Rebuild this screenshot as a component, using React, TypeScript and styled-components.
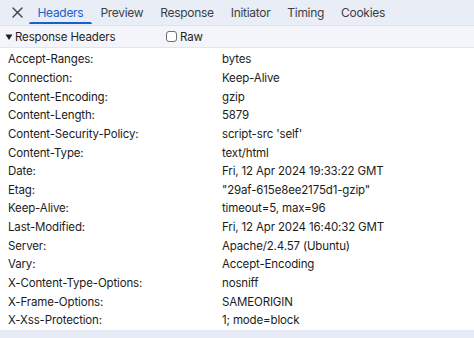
import React from "react";
import styled, { createGlobalStyle } from "styled-components";

const Global = createGlobalStyle`
  html, body { margin: 0; padding: 0; background: #fff; }
  body { font-family: Inter, "Noto Sans", sans-serif; color: #1f1f1f; }
`;

const Panel = styled.div`
  width: 474px;
  height: 338px;
  overflow: hidden;
  display: flex;
  flex-direction: column;
  background: #fff;
`;

const TabBar = styled.div`
  height: 25px;
  background: #e9edf6;
  display: flex;
  align-items: stretch;
  padding-left: 10px;
  flex-shrink: 0;
`;

const Close = styled.div`
  width: 14px;
  display: flex;
  align-items: center;
  justify-content: center;
  margin-right: 5px;
`;

const Tab = styled.div<{ $active?: boolean }>`
  position: relative;
  padding: 0 8.5px;
  display: flex;
  align-items: center;
  font-size: 12px;
  letter-spacing: -0.3px;
  color: ${(p) => (p.$active ? "#1b5fcf" : "#3c3f46")};
  ${(p) =>
    p.$active &&
    `&::after { content: ""; position: absolute; left: 0; right: 0; bottom: 1px; height: 2px; background: #1b5fcf; border-radius: 2px 2px 0 0; }`}
`;

const SubBar = styled.div`
  height: 21px;
  background: #f3f5fa;
  border-top: 1px solid #dfe3ec;
  border-bottom: 1px solid #e3e6ee;
  display: flex;
  align-items: center;
  padding-left: 5px;
  font-size: 11.5px;
  letter-spacing: -0.15px;
  flex-shrink: 0;
`;

const Section = styled.div`
  width: 161px;
  display: flex;
  align-items: center;
  gap: 2px;
`;

const Check = styled.label`
  display: flex;
  align-items: center;
  gap: 3px;
`;

const Box = styled.span`
  width: 11px;
  height: 11px;
  border: 1px solid #6e6e73;
  border-radius: 3px;
  background: #fff;
  box-sizing: border-box;
`;

const Rows = styled.div`
  padding-top: 2px;
  flex: 1;
`;

const Row = styled.div`
  display: grid;
  grid-template-columns: 214px 1fr;
  height: 18.65px;
  align-items: center;
  padding-left: 8px;
  font-size: 11.5px;
  letter-spacing: -0.15px;
  color: #1c1c1c;
  white-space: nowrap;
`;

const Footer = styled.div`
  height: 9px;
  background: #e6ebf6;
  flex-shrink: 0;
`;

const headers: [string, string][] = [
  ["Accept-Ranges:", "bytes"],
  ["Connection:", "Keep-Alive"],
  ["Content-Encoding:", "gzip"],
  ["Content-Length:", "5879"],
  ["Content-Security-Policy:", "script-src 'self'"],
  ["Content-Type:", "text/html"],
  ["Date:", "Fri, 12 Apr 2024 19:33:22 GMT"],
  ["Etag:", "\"29af-615e8ee2175d1-gzip\""],
  ["Keep-Alive:", "timeout=5, max=96"],
  ["Last-Modified:", "Fri, 12 Apr 2024 16:40:32 GMT"],
  ["Server:", "Apache/2.4.57 (Ubuntu)"],
  ["Vary:", "Accept-Encoding"],
  ["X-Content-Type-Options:", "nosniff"],
  ["X-Frame-Options:", "SAMEORIGIN"],
  ["X-Xss-Protection:", "1; mode=block"],
];

const tabs = ["Headers", "Preview", "Response", "Initiator", "Timing", "Cookies"];

export default function App() {
  return (
    <>
      <Global />
      <Panel>
        <TabBar>
          <Close>
            <svg width="11" height="11" viewBox="0 0 11 11">
              <path d="M1 1L10 10M10 1L1 10" stroke="#3c3f46" strokeWidth="1.4" strokeLinecap="round" />
            </svg>
          </Close>
          {tabs.map((t, i) => (
            <Tab key={t} $active={i === 0}>
              {t}
            </Tab>
          ))}
        </TabBar>
        <SubBar>
          <Section>
            <svg width="8" height="8" viewBox="0 0 8 8">
              <path d="M0.5 1.5H7.5L4 7Z" fill="#1f1f1f" />
            </svg>
            <span>Response Headers</span>
          </Section>
          <Check>
            <Box />
            <span>Raw</span>
          </Check>
        </SubBar>
        <Rows>
          {headers.map(([k, v]) => (
            <Row key={k}>
              <span>{k}</span>
              <span>{v}</span>
            </Row>
          ))}
        </Rows>
        <Footer />
      </Panel>
    </>
  );
}
